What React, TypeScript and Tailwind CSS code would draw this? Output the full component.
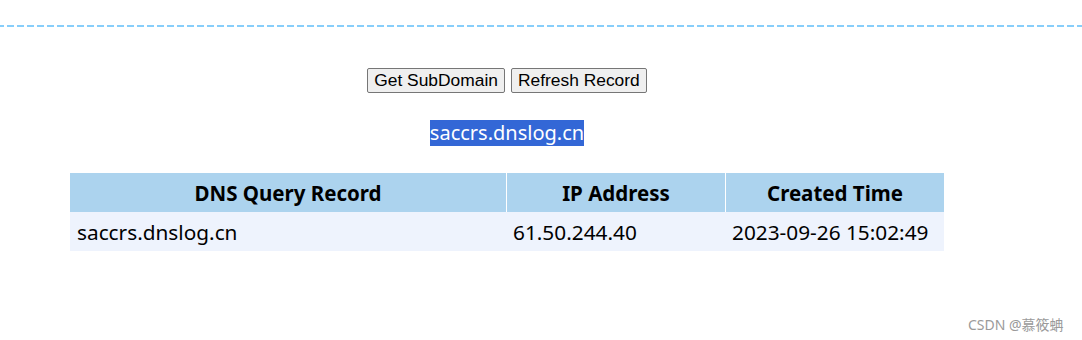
const records = [
  { domain: 'saccrs.dnslog.cn', ip: '61.50.244.40', time: '2023-09-26 15:02:49' },
];

export default function App() {
  return (
    <div className="relative w-[1082px] h-[340px] bg-white overflow-hidden">
      {/* dashed top rule */}
      <div className="pt-[25px]">
        <div className="h-[2px] w-full bg-[repeating-linear-gradient(90deg,#87cefa_0px,#87cefa_7px,transparent_7px,transparent_10px)] bg-[position:-3px_0]" />
      </div>

      <div className="w-[1014px] flex flex-col items-center">
        {/* buttons */}
        <div className="mt-[41px] flex gap-[6px] font-['Liberation_Sans',Arial,sans-serif] text-[17.4px] text-black">
          <button className="h-[25px] px-[6px] pt-px bg-[#efefef] border border-[#767676] rounded-[2px] leading-none">
            Get SubDomain
          </button>
          <button className="h-[25px] px-[6px] pt-px bg-[#efefef] border border-[#767676] rounded-[2px] leading-none">
            Refresh Record
          </button>
        </div>

        {/* current subdomain, shown selected */}
        <div className="mt-[27px] h-[26px] flex items-center bg-[#3367d6] text-white text-[20px] font-['Noto_Sans',sans-serif] leading-none">
          saccrs.dnslog.cn
        </div>

        {/* records table */}
        <div className="mt-[27px] w-[874px] font-['Noto_Sans',sans-serif] text-black">
          <div className="grid grid-cols-[436px_218px_218px] gap-x-px h-[39px] text-[20.5px] font-bold">
            <div className="bg-[#acd3ee] flex items-center justify-center pt-[2px]">DNS Query Record</div>
            <div className="bg-[#acd3ee] flex items-center justify-center pt-[2px]">IP Address</div>
            <div className="bg-[#acd3ee] flex items-center justify-center pt-[2px]">Created Time</div>
          </div>
          {records.map((r) => (
            <div key={r.domain} className="grid grid-cols-[436px_218px_218px] gap-x-px h-[39px] bg-[#eef3fd] text-[20.8px]">
              <div className="flex items-center pl-[7px] pt-[2px]">{r.domain}</div>
              <div className="flex items-center pl-[6px] pt-[2px]">{r.ip}</div>
              <div className="flex items-center pl-[6px] pt-[2px]">{r.time}</div>
            </div>
          ))}
        </div>
      </div>

      {/* watermark */}
      <div className="absolute left-[968px] top-[314px] text-[14px] text-[#9a9a9a] font-['Noto_Sans','Noto_Sans_CJK_SC',sans-serif] whitespace-nowrap">
        CSDN @慕筱蚺
      </div>
    </div>
  );
}
